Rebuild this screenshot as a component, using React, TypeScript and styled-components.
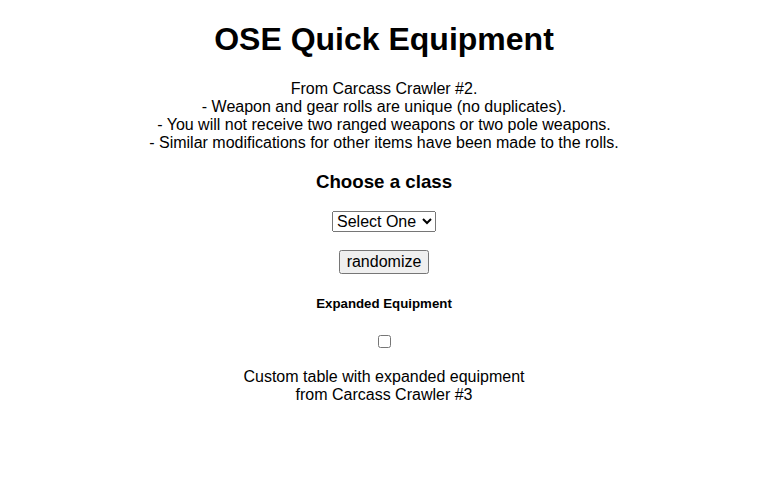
import React, {FC, useState} from "react";
import styled, {createGlobalStyle} from "styled-components";

const GlobalStyle = createGlobalStyle`
  body {
    margin: 8px;
    font-family: "Liberation Sans", Arial, sans-serif;
    color: #000;
    background: #fff;
  }
`;

const Page = styled.div`
  text-align: center;
`;

const Title = styled.h1`
  font-size: 32px;
  font-weight: bold;
  margin: 13.44px 0 21.44px;
`;

const Intro = styled.p`
  font-size: 16px;
  margin: 16px 0;
`;

const ClassHeading = styled.h3`
  font-size: 18.72px;
  margin: 18.72px 0;
`;

const Field = styled.div<{ $top?: number }>`
  margin-top: ${(p) => p.$top ?? 0}px;
`;

const ClassSelect = styled.select`
  font-family: "Liberation Sans", Arial, sans-serif;
  font-size: 16px;
`;

const RandomButton = styled.button`
  font-family: "Liberation Sans", Arial, sans-serif;
  font-size: 16px;
  padding: 1px 6px;
`;

const SmallHeading = styled.h5`
  font-size: 13.28px;
  margin: 22.18px 0 20.18px;
`;

const Note = styled.p`
  font-size: 16px;
  margin: 16px 0;
`;

const classes = ["Cleric", "Dwarf", "Elf", "Fighter", "Halfling", "Magic-User", "Thief"];

const App: FC = () => {
  const [cls, setCls] = useState<string>("");
  const [expanded, setExpanded] = useState<boolean>(false);

  return (
    <Page>
      <GlobalStyle/>
      <Title>OSE Quick Equipment</Title>
      <Intro>
        From Carcass Crawler #2.<br/>
        - Weapon and gear rolls are unique (no duplicates).<br/>
        - You will not receive two ranged weapons or two pole weapons.<br/>
        - Similar modifications for other items have been made to the rolls.
      </Intro>
      <ClassHeading>Choose a class</ClassHeading>
      <Field>
        <ClassSelect value={cls} onChange={(e) => setCls(e.target.value)}>
          <option value="">Select One</option>
          {classes.map((c) => <option key={c} value={c}>{c}</option>)}
        </ClassSelect>
      </Field>
      <Field $top={18}>
        <RandomButton>randomize</RandomButton>
      </Field>
      <SmallHeading>Expanded Equipment</SmallHeading>
      <Field>
        <input type="checkbox" checked={expanded} onChange={(e) => setExpanded(e.target.checked)}/>
      </Field>
      <Note>
        Custom table with expanded equipment<br/>
        from Carcass Crawler #3
      </Note>
    </Page>
  );
};

export default App;
